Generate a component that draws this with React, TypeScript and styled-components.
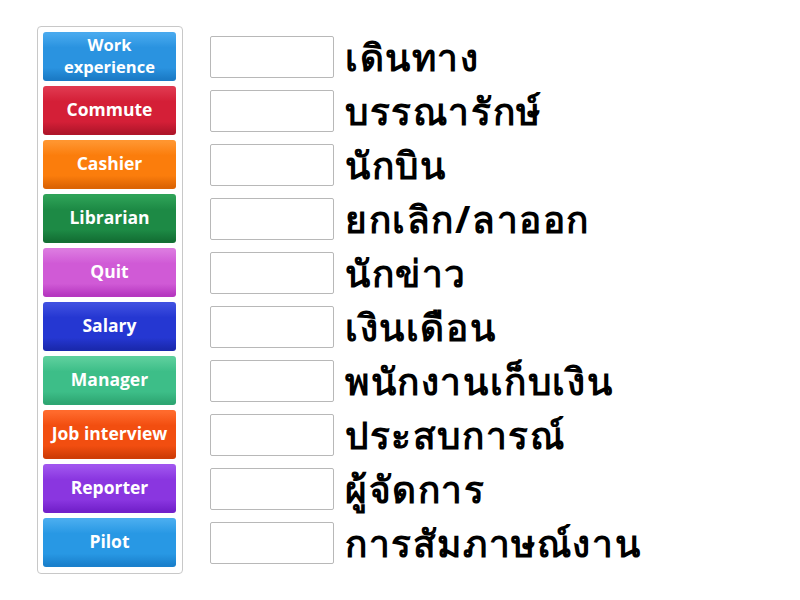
import React from "react";
import styled, { createGlobalStyle } from "styled-components";

const GlobalStyle = createGlobalStyle`
  body {
    margin: 0;
    background: #ffffff;
    font-family: "Open Sans", "Noto Sans", sans-serif;
  }
`;

const Page = styled.div`
  display: flex;
  align-items: flex-start;
  padding: 26px 0 0 37px;
  gap: 27px;
`;

const Tray = styled.div`
  display: flex;
  flex-direction: column;
  gap: 5px;
  padding: 5px 6px 6px 5px;
  width: 133px;
  border: 1px solid #c8c8c8;
  border-radius: 4px;
  background: #ffffff;
`;

const Tile = styled.div<{ $bg: string; $top: string; $bottom: string }>`
  height: 49px;
  box-sizing: border-box;
  padding-bottom: 3px;
  display: flex;
  align-items: center;
  justify-content: center;
  text-align: center;
  border-radius: 3px;
  background: linear-gradient(${(p) => p.$top}, ${(p) => p.$bg} 30%, ${(p) => p.$bg} 75%, ${(p) => p.$bottom});
  border-top: 2px solid ${(p) => p.$top};
  border-bottom: 2px solid ${(p) => p.$bottom};
  color: #ffffff;
  font-family: "Open Sans", sans-serif;
  font-weight: 700;
  font-size: 17.5px;
  line-height: 24px;
  white-space: nowrap;
`;

const TwoLines = styled.span`
  display: block;
  font-size: 16.5px;
  line-height: 22px;
  margin-top: 1px;
`;

const Targets = styled.div`
  display: flex;
  flex-direction: column;
  padding-top: 4px;
`;

const Row = styled.div`
  height: 54px;
  display: flex;
  align-items: center;
  gap: 11px;
`;

const Slot = styled.div`
  width: 124px;
  height: 42px;
  box-sizing: border-box;
  border: 1px solid #b8b8b8;
  border-radius: 2px;
  background: #ffffff;
`;

const Word = styled.span`
  font-family: "Noto Sans", "DejaVu Sans", sans-serif;
  font-size: 37px;
  font-weight: 700;
  letter-spacing: 1.6px;
  color: #000000;
  white-space: nowrap;
`;

const tiles = [
  { label: "Work experience", bg: "#2a93e0", top: "#48a9ee", bottom: "#1b7bc6" },
  { label: "Commute", bg: "#d41f37", top: "#e0384f", bottom: "#b0152a" },
  { label: "Cashier", bg: "#fb7d0c", top: "#ff952f", bottom: "#dc6404" },
  { label: "Librarian", bg: "#1d8a45", top: "#2ea257", bottom: "#136f34" },
  { label: "Quit", bg: "#d05ad6", top: "#dc7ae0", bottom: "#b637c0" },
  { label: "Salary", bg: "#2537d2", top: "#3f50e0", bottom: "#1a29ae" },
  { label: "Manager", bg: "#3dbe88", top: "#5ccf9c", bottom: "#2ea672" },
  { label: "Job interview", bg: "#f24e10", top: "#ff6a2c", bottom: "#cf3c06" },
  { label: "Reporter", bg: "#8a36e0", top: "#a055ee", bottom: "#7220ca" },
  { label: "Pilot", bg: "#2898e4", top: "#48acef", bottom: "#1a80cc" },
];

const words = [
  "เดินทาง",
  "บรรณารักษ์",
  "นักบิน",
  "ยกเลิก/ลาออก",
  "นักข่าว",
  "เงินเดือน",
  "พนักงานเก็บเงิน",
  "ประสบการณ์",
  "ผู้จัดการ",
  "การสัมภาษณ์งาน",
];

export default function App() {
  return (
    <>
      <GlobalStyle />
      <Page>
        <Tray>
          {tiles.map((t) => (
            <Tile key={t.label} $bg={t.bg} $top={t.top} $bottom={t.bottom}>
              {t.label === "Work experience" ? (
                <TwoLines>
                  Work
                  <br />
                  experience
                </TwoLines>
              ) : (
                t.label
              )}
            </Tile>
          ))}
        </Tray>
        <Targets>
          {words.map((w) => (
            <Row key={w}>
              <Slot />
              <Word>{w}</Word>
            </Row>
          ))}
        </Targets>
      </Page>
    </>
  );
}
